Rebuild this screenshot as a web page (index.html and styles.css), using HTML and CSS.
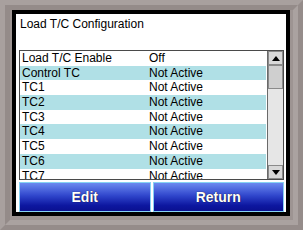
FILE: index.html
```html
<!DOCTYPE html>
<html>
<head>
<meta charset="utf-8">
<link rel="stylesheet" href="styles.css">
</head>
<body>
<div class="bezel">
  <div class="bezel-inner">
    <div class="screen">
      <div class="title">Load T/C Configuration</div>
      <div class="list">
        <div class="rows">
          <div class="row"><span class="name">Load T/C Enable</span><span class="val">Off</span></div>
          <div class="row hl"><span class="name">Control TC</span><span class="val">Not Active</span></div>
          <div class="row"><span class="name">TC1</span><span class="val">Not Active</span></div>
          <div class="row hl"><span class="name">TC2</span><span class="val">Not Active</span></div>
          <div class="row"><span class="name">TC3</span><span class="val">Not Active</span></div>
          <div class="row hl"><span class="name">TC4</span><span class="val">Not Active</span></div>
          <div class="row"><span class="name">TC5</span><span class="val">Not Active</span></div>
          <div class="row hl"><span class="name">TC6</span><span class="val">Not Active</span></div>
          <div class="row"><span class="name">TC7</span><span class="val">Not Active</span></div>
        </div>
        <div class="scrollbar">
          <div class="sb-btn"><svg width="8" height="5" viewBox="0 0 8 5"><polygon points="0,5 8,5 4,0" fill="#000"/></svg></div>
          <div class="sb-thumb"></div>
          <div class="sb-track"></div>
          <div class="sb-btn"><svg width="8" height="5" viewBox="0 0 8 5"><polygon points="0,0 8,0 4,5" fill="#000"/></svg></div>
        </div>
      </div>
      <div class="buttons">
        <div class="btn">Edit</div>
        <div class="btn">Return</div>
      </div>
    </div>
  </div>
</div>
</body>
</html>
```
FILE: styles.css
```css
html, body {
  margin: 0;
  padding: 0;
  background: #9d9492;
}
.bezel {
  width: 303px;
  height: 230px;
  box-sizing: border-box;
  border: 5px solid;
  border-color: #a8a09e #958c8a #958c8a #a8a09e;
  background: #9d9492;
}
.bezel-inner {
  height: 100%;
  box-sizing: border-box;
  border: 5px solid;
  border-color: #948b89 #aaa2a0 #aaa2a0 #948b89;
  padding: 0 3px 4px 2px;
}
.screen {
  height: 100%;
  box-sizing: border-box;
  border: 4px solid #000;
  background: #fff;
  padding: 0 2px 0 3px;
  display: flex;
  flex-direction: column;
  font-family: "Liberation Sans", Arial, sans-serif;
}
.title {
  font-size: 12px;
  line-height: 14px;
  color: #000;
  padding: 3px 0 0 1px;
  height: 33px;
  box-sizing: border-box;
  margin-bottom: 3px;
}
.list {
  height: 130px;
  box-sizing: border-box;
  border: 1px solid #4a4a4a;
  display: flex;
}
.rows {
  flex: 1;
  overflow: hidden;
  padding-right: 1px;
}
.row {
  height: 14.7px;
  line-height: 14.7px;
  font-size: 12px;
  color: #000;
  display: flex;
  padding-left: 2px;
  white-space: nowrap;
}
.row.hl {
  background: #b0e0e6;
}
.name {
  width: 127px;
}
.scrollbar {
  width: 16px;
  box-sizing: border-box;
  border-left: 1px solid #6a6a6a;
  display: flex;
  flex-direction: column;
  background: #e6e6e6;
}
.sb-btn {
  height: 14px;
  box-sizing: border-box;
  border: 1px solid #8a8a8a;
  background: #d8d8d8;
  display: flex;
  align-items: center;
  justify-content: center;
}
.sb-thumb {
  height: 24px;
  box-sizing: border-box;
  border: 1px solid #8a8a8a;
  background: #cfcfcf;
}
.sb-track {
  flex: 1;
}
.buttons {
  flex: 1;
  margin-top: 2px;
  display: flex;
  gap: 2px;
}
.btn {
  flex: 1;
  box-sizing: border-box;
  border: 1px solid #86d2f4;
  background: linear-gradient(to bottom, #6c8af0 0%, #3046cc 45%, #0d17a0 80%, #0a1090 100%);
  color: #fff;
  font-weight: bold;
  font-size: 14px;
  display: flex;
  align-items: center;
  justify-content: center;
  text-shadow: 0 0 1px #000;
}
```
